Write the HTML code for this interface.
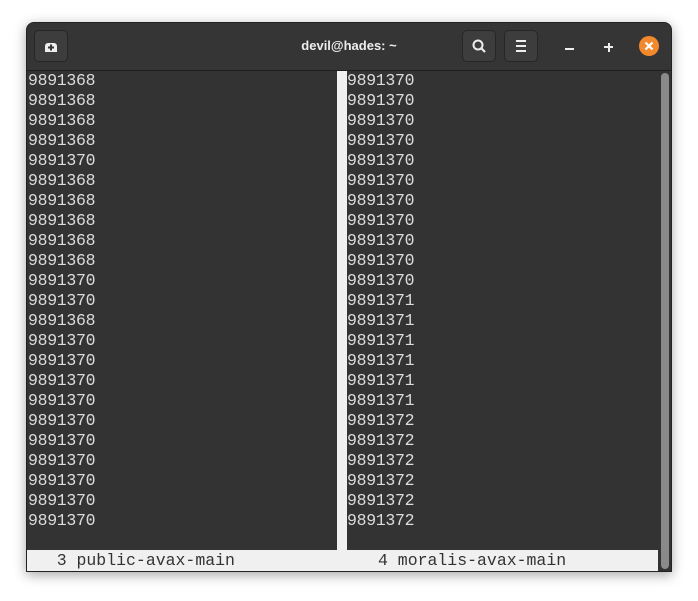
<!DOCTYPE html>
<html><head><style>
body{margin:0;width:698px;height:601px;background:#fff;position:relative;overflow:hidden;font-family:"Liberation Sans",sans-serif}
.win{position:absolute;left:26px;top:22px;width:646px;height:550px;background:#333;border-radius:8px 8px 0 0;box-shadow:0 3px 12px rgba(0,0,0,.35);overflow:hidden;border:1px solid #222;box-sizing:border-box}
.hdr{position:absolute;left:0;top:0;width:100%;height:47px;background:#353535;border-bottom:1px solid #1e1e1e}
.btn{position:absolute;top:7px;width:34px;height:32px;background:#3d3d3d;border:1px solid #262626;border-radius:5px;box-sizing:border-box}
.title{position:absolute;left:0;right:0;top:15px;text-align:center;color:#eee;font-weight:bold;font-size:13px}
.mono{font-family:"Liberation Mono",monospace;font-size:16.5px;line-height:20px;color:#ddd;white-space:pre;letter-spacing:-0.3px}
.pane{position:absolute;top:48px}
</style></head><body>
<div class="win">
<div class="hdr">
<div class="btn" style="left:7px"><svg width="32" height="30"><path d="M10 21v-6a3 3 0 0 1 3-3h6a3 3 0 0 1 3 3v6z" fill="#eee"/><path d="M16 13.5v6M13 16.5h6" stroke="#333" stroke-width="2"/></svg></div>
<div class="title">devil@hades: ~</div>
<div class="btn" style="left:435px"><svg width="32" height="30"><circle cx="15" cy="14" r="4.5" fill="none" stroke="#eee" stroke-width="2"/><path d="M18 17l4 4" stroke="#eee" stroke-width="2.2"/></svg></div>
<div class="btn" style="left:477px"><svg width="32" height="30"><path d="M11 10h10M11 15h10M11 20h10" stroke="#eee" stroke-width="2"/></svg></div>
<div style="position:absolute;left:538px;top:25px;width:9px;height:2px;background:#eee"></div>
<div style="position:absolute;left:577px;top:23px;width:9px;height:2px;background:#eee"></div>
<div style="position:absolute;left:580.5px;top:19.5px;width:2px;height:9px;background:#eee"></div>
<div style="position:absolute;left:612px;top:13px;width:20px;height:20px;border-radius:50%;background:#f2892c"><svg width="20" height="20"><path d="M6.5 6.5l7 7M13.5 6.5l-7 7" stroke="#fff" stroke-width="2.2"/></svg></div>
</div>
<div class="pane mono" style="left:1px">9891368
9891368
9891368
9891368
9891370
9891368
9891368
9891368
9891368
9891368
9891370
9891370
9891368
9891370
9891370
9891370
9891370
9891370
9891370
9891370
9891370
9891370
9891370</div>
<div style="position:absolute;left:310px;top:48px;width:10px;height:480px;background:#f0f0f0"></div>
<div class="pane mono" style="left:320px">9891370
9891370
9891370
9891370
9891370
9891370
9891370
9891370
9891370
9891370
9891370
9891371
9891371
9891371
9891371
9891371
9891371
9891372
9891372
9891372
9891372
9891372
9891372</div>
<div class="mono" style="position:absolute;left:0px;top:527px;width:631px;height:21px;background:#f0f0f0;color:#333;letter-spacing:0;padding-top:1px;box-sizing:border-box">   3 public-avax-main<span style="position:absolute;left:351px;top:1px">4 moralis-avax-main</span></div>
<div style="position:absolute;left:634px;top:50px;width:8px;height:496px;background:#8a8a8a;border-radius:4px"></div>
</div>
</body></html>
